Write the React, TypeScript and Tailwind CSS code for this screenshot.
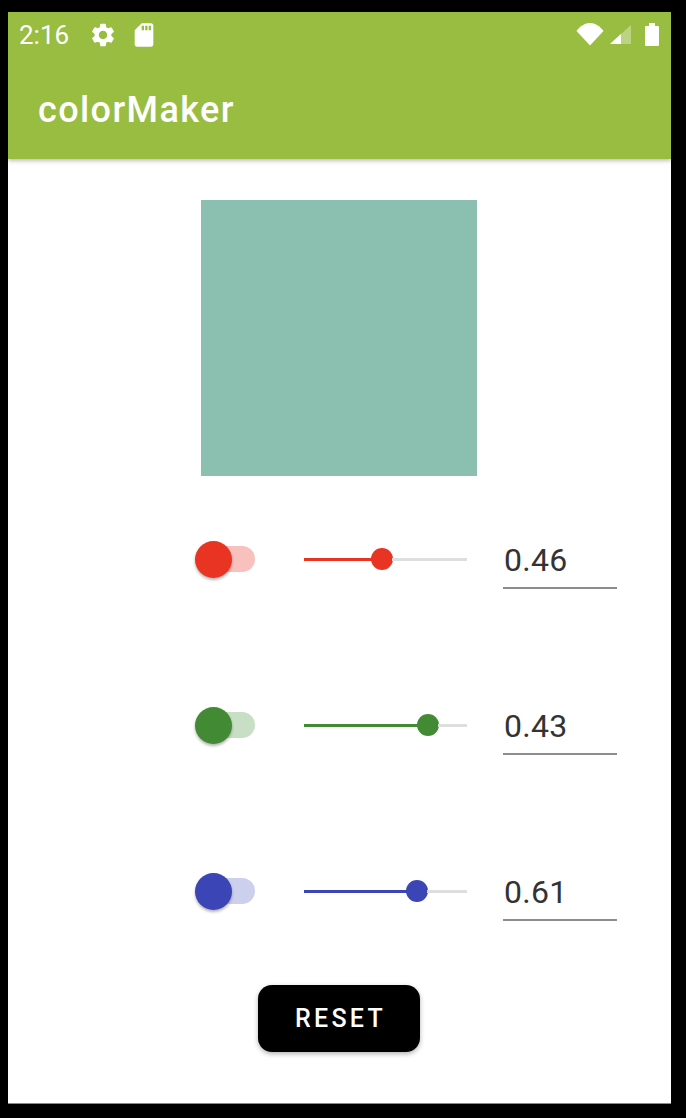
const channels = [
  { value: '0.46', color: 'bg-[#e93323]', track: 'bg-[#f8c1bd]', fill: 'w-[68px]', mt: 'mt-[55px]' },
  { value: '0.43', color: 'bg-[#438a35]', track: 'bg-[#c8dfc5]', fill: 'w-[114px]', mt: 'mt-[108px]' },
  { value: '0.61', color: 'bg-[#3b45b5]', track: 'bg-[#ccd0ed]', fill: 'w-[103px]', mt: 'mt-[108px]' },
];

function StatusBar() {
  return (
    <div className="flex h-[45px] items-center pl-[11px] pr-[12px] text-white">
      <span className="text-[26px] leading-none">2:16</span>
      <svg viewBox="0 0 24 24" className="ml-[20px] h-[28px] w-[28px]" fill="currentColor">
        <path d="M19.14 12.94c.04-.3.06-.61.06-.94 0-.32-.02-.64-.07-.94l2.03-1.58c.18-.14.23-.41.12-.61l-1.92-3.32c-.12-.22-.37-.29-.59-.22l-2.39.96c-.5-.38-1.03-.7-1.62-.94l-.36-2.54c-.04-.24-.24-.41-.48-.41h-3.84c-.24 0-.43.17-.47.41l-.36 2.54c-.59.24-1.13.57-1.62.94l-2.39-.96c-.22-.08-.47 0-.59.22L2.74 8.87c-.12.21-.08.47.12.61l2.03 1.58c-.05.3-.09.63-.09.94s.02.64.07.94l-2.03 1.58c-.18.14-.23.41-.12.61l1.92 3.32c.12.22.37.29.59.22l2.39-.96c.5.38 1.03.7 1.62.94l.36 2.54c.05.24.24.41.48.41h3.84c.24 0 .44-.17.47-.41l.36-2.54c.59-.24 1.13-.56 1.62-.94l2.39.96c.22.08.47 0 .59-.22l1.92-3.32c.12-.22.07-.47-.12-.61l-2.01-1.58zM12 15.6c-1.98 0-3.6-1.62-3.6-3.6s1.62-3.6 3.6-3.6 3.6 1.62 3.6 3.6-1.62 3.6-3.6 3.6z" />
      </svg>
      <svg viewBox="0 0 24 24" className="ml-[13px] h-[28px] w-[28px]" fill="currentColor">
        <path d="M18 2h-8L4.02 8 4 20c0 1.1.9 2 2 2h12c1.1 0 2-.9 2-2V4c0-1.1-.9-2-2-2zm-6 6h-2V4h2v4zm3 0h-2V4h2v4zm3 0h-2V4h2v4z" />
      </svg>
      <svg viewBox="0 0 28 23" className="ml-auto h-[23px] w-[28px]" fill="currentColor">
        <path d="M0.5 8 C4 3 9 0 14 0 C19 0 24 3 27.5 8 L14 22.5 Z" />
      </svg>
      <svg viewBox="0 0 21 19" className="ml-[6px] h-[19px] w-[21px]" fill="currentColor">
        <path d="M0 19 L21 0 V19 Z" opacity="0.35" />
        <path d="M0 19 L11 9 V19 Z" />
      </svg>
      <svg viewBox="0 0 14 23" className="ml-[14px] h-[23px] w-[14px]" fill="currentColor">
        <path d="M4 0 H10 V3 H13 Q14 3 14 4 V22 Q14 23 13 23 H1 Q0 23 0 22 V4 Q0 3 1 3 H4 Z" />
      </svg>
    </div>
  );
}

export default function App() {
  return (
    <div className="h-[1118px] w-[686px] bg-black pb-[14px] pl-[8px] pr-[15px] pt-[12px] font-['Roboto',sans-serif]">
      <div className="flex h-full flex-col border-b border-[#8a8a8a] bg-white">
        <div className="h-[147px] bg-[#99bd40] shadow-[0_2px_4px_rgba(0,0,0,0.25)]">
          <StatusBar />
          <h1 className="pl-[30px] pt-[24px] text-[36px] font-medium leading-[58px] tracking-[1.4px] text-white">colorMaker</h1>
        </div>

        <div className="ml-[193px] mt-[41px] h-[276px] w-[276px] bg-[#8bc0b0]" />

        {channels.map((c) => (
          <div key={c.value} className={`flex h-[58px] items-center pl-[187px] ${c.mt}`}>
            <div className="relative mb-[2px] flex h-[37px] w-[60px] items-center">
              <div className={`ml-[10px] h-[26px] w-[50px] rounded-full ${c.track}`} />
              <div className={`absolute left-0 top-0 h-[37px] w-[37px] rounded-full shadow-[0_2px_3px_rgba(0,0,0,0.3)] ${c.color}`} />
            </div>
            <div className="mb-[2px] ml-[49px] flex h-[22px] w-[163px] items-center">
              <div className={`h-[3px] ${c.fill} ${c.color}`} />
              <div className={`-mx-px h-[22px] w-[22px] shrink-0 rounded-full ${c.color}`} />
              <div className="h-[3px] flex-1 bg-[#dedede]" />
            </div>
            <div className="ml-[36px] h-[58px] w-[114px] border-b-2 border-[#8c8c8c] pl-px text-[32px] leading-[58px] tracking-[0.3px] text-[#333333]">
              {c.value}
            </div>
          </div>
        ))}

        <button className="ml-[250px] mt-[64px] h-[67px] w-[162px] rounded-[14px] bg-black pl-[3px] text-[25px] font-medium tracking-[3.3px] text-white shadow-[0_2px_5px_rgba(0,0,0,0.3)]">
          RESET
        </button>
      </div>
    </div>
  );
}
